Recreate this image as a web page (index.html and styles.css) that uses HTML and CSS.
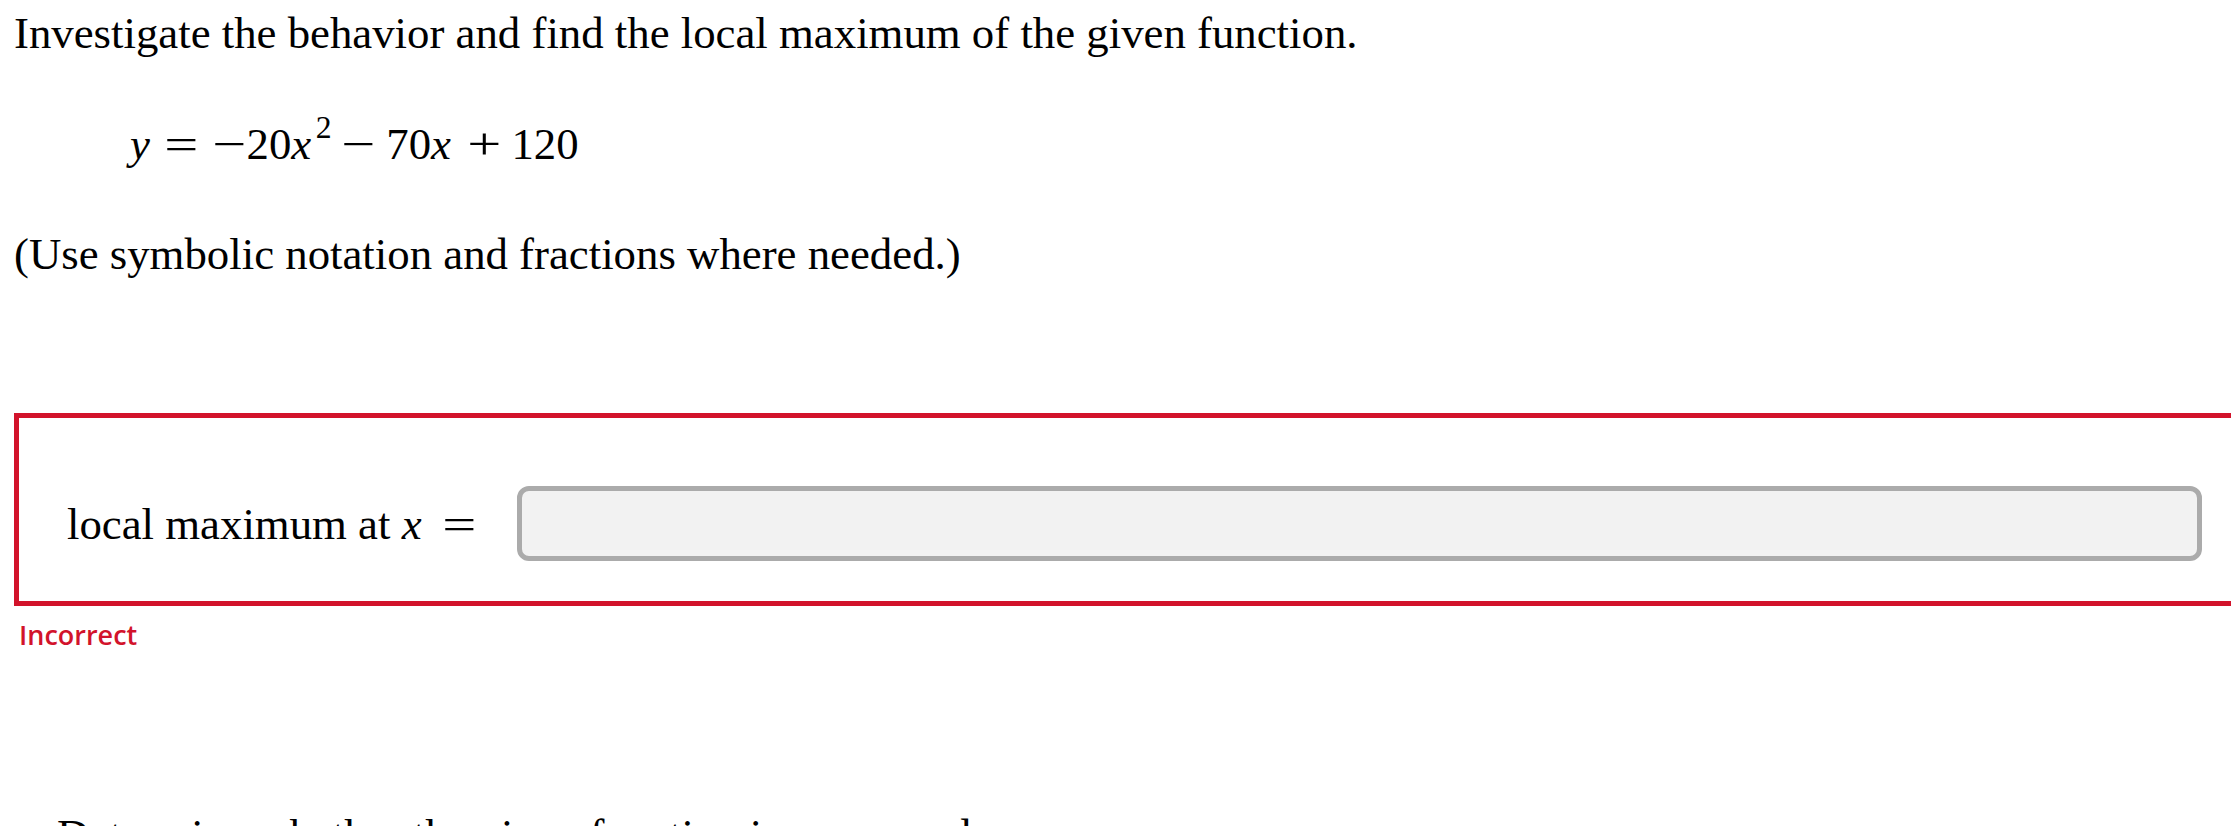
FILE: index.html
```html
<!DOCTYPE html>
<html lang="en">
<head>
<meta charset="utf-8">
<title>Local maximum</title>
<link rel="stylesheet" href="styles.css">
</head>
<body>
<main class="page">
  <p class="prompt">Investigate the behavior and find the local maximum of the given function.</p>
  <div class="equation">
    <span class="mi mi-y">y</span><span class="mo rel">=</span><span class="mo">−</span><span class="mn">20</span><span class="mi mi-x">x</span><sup class="sup">2</sup><span class="mo bin">−</span><span class="mn">70</span><span class="mi mi-x">x</span><span class="mo bin">+</span><span class="mn">120</span>
  </div>
  <p class="hint">(Use symbolic notation and fractions where needed.)</p>
  <div class="answer-box">
    <label class="answer-label" for="answer">local maximum at <span class="mi mi-x">x</span><span class="mo rel">=</span></label>
    <input class="answer-input" id="answer" type="text">
  </div>
  <div class="feedback">Incorrect</div>
  <p class="next">Determine whether the given function is concave down or concave up.</p>
</main>
</body>
</html>
```

FILE: styles.css
```css
html, body {
  margin: 0;
  padding: 0;
  background: #ffffff;
  overflow: hidden;
}

.page {
  padding: 3px 0 0 14px;
  font-family: "Liberation Serif", "Times New Roman", serif;
  font-size: 44.8px;
  line-height: 60px;
  color: #000000;
}

.prompt {
  margin: 0;
}

.equation {
  margin: 51px 0 0 0;
  padding-left: 116px;
  line-height: 60px;
  white-space: nowrap;
}

.mi {
  font-style: italic;
  display: inline-block;
}

.mi-y {
  width: 0.49em;
}

.mi-x {
  width: 0.572em;
}

.mo {
  display: inline-block;
  width: 0.778em;
  text-align: center;
  transform: scaleX(1.35);
}

.mo.rel {
  margin: 0 0.278em;
}

.mo.bin {
  margin: 0 0.222em;
}

.sup {
  font-size: 0.707em;
  vertical-align: 0.66em;
  line-height: 0;
  margin-left: -0.04em;
}

.hint {
  margin: 50px 0 0 0;
}

.answer-box {
  box-sizing: border-box;
  margin-top: 129px;
  width: 2260px;
  height: 193px;
  border: 5px solid #d2132b;
  padding: 68px 0 40px 48px;
  display: flex;
  align-items: center;
  gap: 40px;
}

.answer-label {
  white-space: nowrap;
}

.answer-label .mi-x {
  width: auto;
}

.answer-label .mo.rel {
  margin: 0 0 0 0.456em;
}

.answer-input {
  box-sizing: border-box;
  flex: none;
  width: 1685px;
  height: 75px;
  margin: 0;
  border: 5px solid #ababab;
  border-radius: 12px;
  background: #f2f2f2;
  outline: none;
  font: inherit;
}

.feedback {
  margin: 12px 0 0 5px;
  font-family: "Open Sans", "Noto Sans", sans-serif;
  font-weight: 600;
  font-size: 27px;
  line-height: 34px;
  color: #d2132b;
}

.next {
  margin: 153px 0 0 43px;
  white-space: nowrap;
}
```
